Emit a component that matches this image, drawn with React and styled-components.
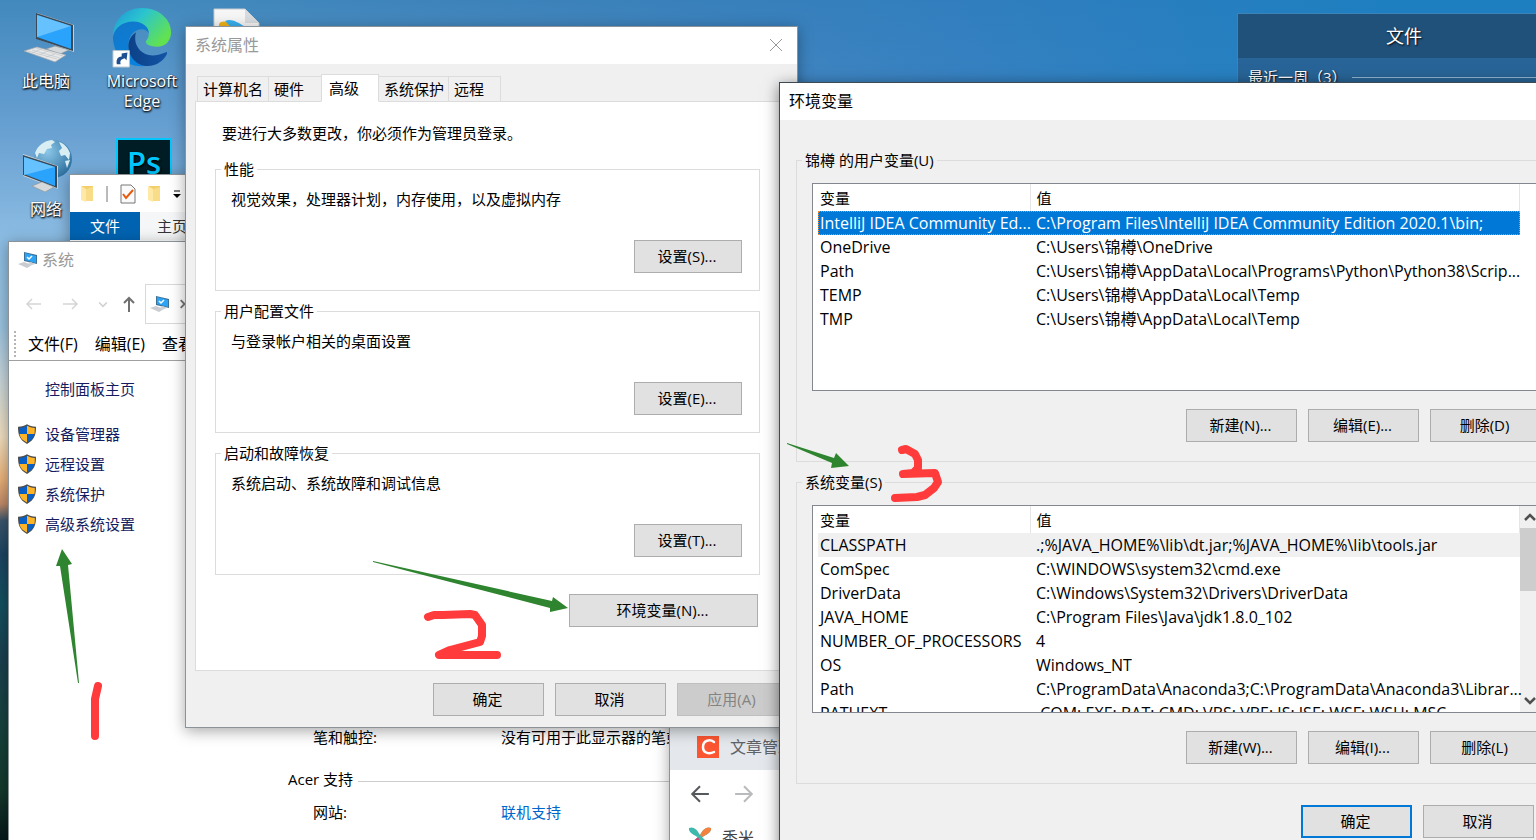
import React, { useState } from "react";
import styled, { createGlobalStyle, css } from "styled-components";

const GlobalStyle = createGlobalStyle`
  * {
    box-sizing: border-box;
  }

  body {
    margin: 0;
    font-family: "Open Sans", "Noto Sans CJK SC", sans-serif;
    font-size: 15px;
    line-height: 20px;
    color: #000;
  }

  button {
    font: inherit;
  }
`;

const Desktop = styled.main`
  position: relative;
  height: 100vh;
  overflow: hidden;
  background:
    linear-gradient(to right, transparent 10%, rgba(50, 118, 180, 0.4) 38%, rgba(44, 122, 190, 0.75) 62%, rgba(28, 126, 192, 0.95) 90%),
    linear-gradient(
      to bottom,
      #4289bd 0%,
      #649dd0 14%,
      #8abbe2 28%,
      #9bc3df 39%,
      #c6d4da 45%,
      #f0dfc0 52%,
      #e9b27a 57%,
      #c08a68 60%,
      #3a566c 62%,
      #1c4462 66%,
      #14505f 72%,
      #1b4150 78%,
      #17433f 86%,
      #143a2c 94%,
      #06181a 100%
    );
`;

const IconGrid = styled.div`
  display: grid;
  grid-template-columns: 92px 100px 90px;
  grid-auto-rows: 128px;
  padding-top: 8px;
`;

const Shortcut = styled.a`
  display: flex;
  flex-direction: column;
  align-items: center;
  gap: 3px;
  color: #fff;
  font-size: 16px;
  text-align: center;
  text-decoration: none;
  text-shadow: 0 1px 2px #000, 1px 1px 2px rgba(0, 0, 0, 0.8);

  svg {
    flex: none;
  }
`;

const Window = styled.section`
  position: absolute;
  left: ${props => props.x}px;
  top: ${props => props.y}px;
  width: ${props => props.w}px;
  min-height: ${props => props.h || 0}px;
  border: 1px solid ${props => (props.active ? "#3c4a55" : "#8b9399")};
  background: ${props => props.bg || "#fff"};
  box-shadow: 0 3px 14px rgba(0, 0, 0, ${props => (props.active ? 0.5 : 0.35)});
`;

const TitleBar = styled.header`
  display: flex;
  align-items: center;
  justify-content: space-between;
  height: 37px;
  padding: 0 9px 2px;
  background: #fff;
  font-size: 16px;
  color: ${props => (props.active ? "#000" : "#999")};

  h2 {
    margin: 0;
    font-size: inherit;
    font-weight: normal;
  }
`;

const CloseButton = styled.button`
  display: flex;
  padding: 5px;
  border: 0;
  background: none;
`;

const PushButton = styled.button`
  width: ${props => props.w || 111}px;
  height: 33px;
  padding: 0 2px 2px 0;
  border: 1px solid #adadad;
  background: #e1e1e1;
  color: #000;

  ${props =>
    props.primary &&
    css`
      border: 2px solid #0078d7;
    `};

  &:disabled {
    border-color: #bfbfbf;
    background: #ccc;
    color: #838383;
  }
`;

const ButtonRow = styled.div`
  display: flex;
  justify-content: flex-end;
  gap: 11px;
`;

const Group = styled.fieldset`
  min-width: 0;
  margin: 0;
  border: 1px solid #dcdcdc;

  legend {
    height: 20px;
    padding: 0 3px;
  }
`;

/* explorer */

const QuickBar = styled.div`
  display: flex;
  align-items: center;
  gap: 12px;
  height: 37px;
  padding-left: 11px;
`;

const RibbonTabs = styled.div`
  display: flex;
  height: 28px;
  background: #f5f6f7;

  button {
    width: 64px;
    padding: 0;
    border: 0;
    background: none;
    color: #333;
  }

  button:first-child {
    width: 70px;
    background: #0063b1;
    color: #fff;
  }
`;

/* control panel: system */

const SystemTitle = styled(TitleBar)`
  justify-content: flex-start;
  gap: 4px;
`;

const NavBar = styled.nav`
  display: flex;
  align-items: center;
  gap: 16px;
  height: 49px;
  padding-left: 15px;
`;

const IconButton = styled.button`
  display: flex;
  padding: 0;
  border: 0;
  background: none;
`;

const NavSteps = styled.div`
  display: flex;
  gap: 20px;
`;

const NavMore = styled.div`
  display: flex;
  align-items: center;
  gap: 10px;
`;

const AddressBox = styled.div`
  display: flex;
  flex: 1;
  align-items: center;
  gap: 6px;
  height: 40px;
  margin-right: 12px;
  margin-left: -9px;
  padding-left: 4px;
  border: 1px solid #d9d9d9;
`;

const MenuBar = styled.div`
  display: flex;
  align-items: center;
  gap: 17px;
  height: 33px;
  padding-left: 5px;
  border-bottom: 1px solid #a0a0a0;

  button {
    padding: 0;
    border: 0;
    background: none;
    font-size: 16px;
  }

  &::before {
    width: 2px;
    height: 26px;
    margin-right: -5px;
    background: repeating-linear-gradient(#b5b5b5 0 2px, transparent 2px 4px);
    content: "";
  }
`;

const SystemBody = styled.div`
  display: grid;
  grid-template-columns: 279px 1fr;
`;

const Sidebar = styled.nav`
  padding: 13px 0 0 9px;

  a {
    display: flex;
    align-items: center;
    gap: 9px;
    height: 30px;
    color: #151c60;
    text-decoration: none;
  }

  > a {
    margin-bottom: 15px;
    padding-left: 27px;
  }

  ul {
    margin: 0;
    padding: 0;
    list-style: none;
  }
`;

const SystemInfo = styled.div`
  padding-top: 361px;
`;

const InfoRow = styled.div`
  display: grid;
  grid-template-columns: 188px 1fr;
  align-items: center;
  height: 30px;
  margin-bottom: 12px;
  padding-left: 25px;

  a {
    color: #0066cc;
    text-decoration: none;
  }
`;

const InfoHeading = styled.h3`
  display: flex;
  align-items: center;
  gap: 5px;
  height: 30px;
  margin: 0 0 3px;
  font-size: 15px;
  font-weight: normal;

  &::after {
    flex: 1;
    height: 1px;
    margin-top: 5px;
    background: #ccc;
    content: "";
  }
`;

/* browser */

const BrowserTab = styled.div`
  display: flex;
  align-items: flex-end;
  gap: 11px;
  height: 69px;
  padding: 0 0 12px 27px;
  background: #e4e8ec;
  color: #5f6368;
  font-size: 16px;
  line-height: 22px;
`;

const BrowserBar = styled.div`
  display: flex;
  align-items: center;
  gap: 24px;
  height: 48px;
  padding-left: 20px;
`;

const Bookmarks = styled.div`
  display: flex;
  align-items: center;
  gap: 10px;
  padding-left: 18px;
  color: #444;
  font-size: 16px;
  line-height: 40px;

  svg:last-child {
    margin-left: 14px;
  }
`;

/* system properties */

const Body = styled.div`
  padding: 10px 9px 11px;
`;

const TabList = styled.div`
  display: flex;
  align-items: flex-end;
  margin-bottom: -1px;
  padding-left: 2px;
`;

const Tab = styled.button`
  position: relative;
  width: ${props => props.w}px;
  height: 26px;
  margin-right: -1px;
  padding: 0 5px;
  border: 1px solid #dcdcdc;
  background: #f0f0f0;
  text-align: left;
  line-height: 24px;
  white-space: nowrap;

  &[aria-selected="true"] {
    z-index: 1;
    height: 28px;
    padding: 0 7px;
    border-bottom-color: #fff;
    background: #fff;
  }
`;

const TabPanel = styled.div`
  margin-bottom: 12px;
  padding: 21px 27px 43px 19px;
  border: 1px solid #dcdcdc;
  background: #fff;

  > p {
    margin: 0 0 16px;
    padding-left: 7px;
  }
`;

const Setting = styled(Group)`
  margin-bottom: 10px;
  padding: 10px 17px 17px 15px;

  legend {
    margin-left: -10px;
  }

  p {
    margin: 0 0 31px;
  }
`;

const PanelAction = styled(ButtonRow)`
  padding: 9px 2px 0 0;
`;

/* environment variables */

const EnvBody = styled.div`
  display: grid;
  gap: 10px;
  padding: 30px 15px 20px 16px;

  > ${ButtonRow} {
    padding: 11px 23px 0 0;
  }
`;

const EnvGroup = styled(Group)`
  padding: 13px 15px 19px;

  legend {
    margin-left: -10px;
  }
`;

const ListBox = styled.div`
  display: grid;
  grid-template-rows: 100%;
  grid-template-columns: 1fr 20px;
  height: 208px;
  margin-bottom: 18px;
  padding-left: 5px;
  overflow: hidden;
  border: 1px solid #828790;
  background: #fff;
`;

const VarTable = styled.table`
  position: relative;
  width: 100%;
  height: max-content;
  border-collapse: collapse;
  table-layout: fixed;
  font-size: 16px;
  text-align: left;
  white-space: nowrap;

  th {
    height: 27px;
    padding: 0 0 0 2px;
    border-right: 1px solid #e5e5e5;
    font-size: 15px;
    font-weight: normal;
  }

  th:first-child {
    width: 212px;
  }

  td {
    height: 24px;
    padding: 0 0 0 2px;
  }

  th + th,
  td + td {
    padding-left: 6px;
  }
`;

const VarRow = styled.tr`
  ${props =>
    props.mark === "selected" &&
    css`
      outline: 1px dotted #ff8728;
      outline-offset: -1px;
      background: #0078d7;
      color: #fff;
    `};

  ${props =>
    props.mark === "inactive" &&
    css`
      background: #f0f0f0;
    `};
`;

const ScrollBar = styled.div`
  display: flex;
  flex-direction: column;
  align-items: center;
  background: #f0f0f0;

  button {
    display: flex;
    align-items: center;
    justify-content: center;
    height: 22px;
    padding: 0;
    border: 0;
    background: none;
  }

  span {
    width: 100%;
    height: 63px;
    margin-bottom: auto;
    background: #cdcdcd;
  }
`;

/* translucent file box on the desktop */

const FileBox = styled.aside`
  position: absolute;
  top: 13px;
  left: 1237px;
  width: 334px;
  height: 300px;
  border: 1px solid #3c84b8;
  background: #286497;
  color: #fff;
  text-shadow: 1px 1px 2px #000;

  h2 {
    margin: 0;
    background: #20517b;
    font-size: 18px;
    font-weight: normal;
    line-height: 44px;
    text-align: center;
  }

  p {
    display: flex;
    align-items: center;
    gap: 5px;
    margin: 9px 0 0 10px;
  }

  p::after {
    flex: 1;
    height: 1px;
    background: #8fb4d0;
    content: "";
  }
`;

const Marks = styled.svg`
  position: absolute;
  top: 0;
  left: 0;
  pointer-events: none;
`;

const ComputerIcon = () => (
  <svg width="60" height="60" viewBox="0 0 60 60">
    <path d="M21 5l37 12v27L21 31z" fill="#c9cdd1" />
    <path d="M20 5l37 12v26L20 31z" fill="#3b4a57" />
    <path d="M21 7l34 11v23L21 29z" fill="#29a3fb" />
    <path d="M21 7l34 11-34 11z" fill="#66c1ff" />
    <path d="M40 38l5 2v5h-6z" fill="#a5abb0" />
    <path d="M30 41l9-3 14 4-9 4z" fill="#d6d9db" stroke="#8c9296" strokeWidth=".6" />
    <path d="M8 43l13-4 29 8-11 7z" fill="#e7e8e9" stroke="#a0a4a7" strokeWidth=".7" />
    <path d="M12 43l29 8M16 42l28 8M20 40l27 8M16 45l9-4M23 47l9-4M30 49l9-3" stroke="#c3c6c9" strokeWidth=".7" />
  </svg>
);

const EdgeIcon = () => (
  <svg width="62" height="60" viewBox="0 0 62 62">
    <defs>
      <linearGradient id="edgeTop" x1="0" y1="0" x2="1" y2=".6">
        <stop offset="0" stopColor="#1c93d8" />
        <stop offset=".45" stopColor="#2ac4d0" />
        <stop offset="1" stopColor="#62e250" />
      </linearGradient>
      <linearGradient id="edgeMid" x1="0" y1="0" x2=".5" y2="1">
        <stop offset="0" stopColor="#1176c8" />
        <stop offset="1" stopColor="#0a82dd" />
      </linearGradient>
      <linearGradient id="edgeLow" x1="0" y1="0" x2="1" y2="0">
        <stop offset="0" stopColor="#0c4187" />
        <stop offset="1" stopColor="#1254a6" />
      </linearGradient>
    </defs>
    <path d="M1 30C1 12 14 0 31 0c18 0 30 12 30 25 0 10-7 15-14 15-8 0-12-2-12-5 0-2 3-3 3-9 0-6-6-10-12-10-12 0-21 6-25 14z" fill="url(#edgeTop)" />
    <path d="M1 30c1-9 10-16 21-16 10 0 16 6 16 12-1-2-4-4-7-4-7 0-14 6-14 16 0 12 8 20 17 22C15 62 1 48 1 30z" fill="url(#edgeMid)" />
    <path d="M25 25c-5 3-8 8-8 14 0 12 9 21 20 21 9 0 17-6 20-13 0-2-1-2-2-1-5 2-9 3-13 3-11 0-18-9-18-17 0-3 0-5 1-7z" fill="url(#edgeLow)" />
    <path d="M1 44h17v17H1z" fill="#fff" stroke="#b9c4cc" />
    <path d="M5 58c-1-5 1-8 5-8v-3l6-1-1 8-2-2c-4 1-5 3-4 6z" fill="#1d4f91" />
  </svg>
);

const PageIcon = () => (
  <svg width="60" height="60" viewBox="0 0 60 60">
    <path d="M7 1h31l14 14v44H7z" fill="#f6f6f6" stroke="#c8ccd0" />
    <path d="M38 1v14h14z" fill="#d9dde0" />
    <path d="M12 16c2-3 6-3 9-1l10 10H12z" fill="#f4b41a" />
    <path d="M18 13c6-3 12 1 19 5l-8 6z" fill="#38b0f0" />
  </svg>
);

const NetworkIcon = () => (
  <svg width="60" height="60" viewBox="0 0 60 60">
    <defs>
      <radialGradient id="globe" cx=".35" cy=".3" r=".8">
        <stop offset="0" stopColor="#8cc7e8" />
        <stop offset="1" stopColor="#286b9c" />
      </radialGradient>
    </defs>
    <circle cx="37" cy="23" r="19" fill="url(#globe)" />
    <path d="M19 17c3-8 9-12 17-13l3 2-4 3 1 3-5 1-3 5-5-1-2 5zM43 6c6 2 9 6 11 11l-1 7-4-5-4 1-2-5 3-3zM49 25l5-1-3 8z" fill="#d8eef2" />
    <path d="M7 18l35 12v23L7 40z" fill="#d0d4d7" />
    <path d="M7 19l34 11v22L7 39z" fill="#3b4a57" />
    <path d="M8 21l31 10v19L8 38z" fill="#29a3fb" />
    <path d="M8 21l31 10-31 8z" fill="#66c1ff" />
    <path d="M16 50l10-4 12 5-9 5z" fill="#d6d9db" stroke="#8c9296" strokeWidth=".6" />
  </svg>
);

const PhotoshopIcon = () => (
  <svg width="60" height="60" viewBox="0 0 60 60">
    <rect x="5" y="3" width="54" height="54" fill="#001d26" stroke="#00c8ff" strokeWidth="2" />
    <text x="32" y="38" fill="#00c8ff" fontFamily="Open Sans" fontSize="31" fontWeight="600" textAnchor="middle">Ps</text>
  </svg>
);

const SmallComputer = () => (
  <svg width="20" height="18" viewBox="0 0 20 18">
    <path d="M6 1l13 3v9L6 10z" fill="#3f6f94" />
    <path d="M7 2l11 3v7L7 9z" fill="#2ca4f5" />
    <path d="M9 6l2 2 3-3" fill="none" stroke="#fff" strokeWidth="1.5" />
    <path d="M0 13l6-2 8 3-5 3zM10 12l3-1 4 2-3 1z" fill="#c9cdd1" />
  </svg>
);

const Folder = () => (
  <svg width="13" height="18" viewBox="0 0 13 18">
    <path d="M1 1h11v13H1z" fill="#f3cf6c" />
    <path d="M0 1l5 3v13l-5-2z" fill="#ffe9a6" />
    <path d="M5 4l7-2v14H5z" fill="#f9dc87" />
  </svg>
);

const Shield = () => (
  <svg width="18" height="20" viewBox="0 0 18 20">
    <path d="M9 .2C11.500 1.800 14 2.600 18 2.800 18 11 16.500 15.800 9 20 1.500 15.800 0 11 0 2.800 4 2.600 6.500 1.800 9 .2z" fill="#4d4d4d" />
    <path d="M9 1.800V10H1.500C1.200 8.300 1.200 6.300 1.200 3.900 4.500 3.800 6.800 3.100 9 1.800z" fill="#0a5fc4" />
    <path d="M9 1.800c2.200 1.300 4.500 2 7.800 2.100 0 2.400 0 4.400-.3 6.100H9z" fill="#ffb428" />
    <path d="M1.500 10H9v8.500C4 16 2.200 13.500 1.500 10z" fill="#ffb428" />
    <path d="M16.500 10H9v8.500c5-2.500 6.800-5 7.500-8.500z" fill="#0a5fc4" />
  </svg>
);

const Arrow = ({ d, color, size = 18, width = 1.5 }) => (
  <svg width={size} height={size} viewBox="0 0 18 18" fill="none" stroke={color} strokeWidth={width}>
    <path d={d} />
  </svg>
);

const LEFT = "M17 9H2M9 2L2 9l7 7";
const RIGHT = "M1 9h15M9 2l7 7-7 7";
const NAV_LEFT = "M17 9H3M8 4L3 9l5 5";
const NAV_RIGHT = "M1 9h14M10 4l5 5-5 5";

const tabs = [
  { name: "计算机名", w: 72 },
  { name: "硬件", w: 54 },
  { name: "高级", w: 58 },
  { name: "系统保护", w: 71 },
  { name: "远程", w: 53 }
];

const settings = [
  { name: "性能", text: "视觉效果，处理器计划，内存使用，以及虚拟内存", button: "设置(S)..." },
  { name: "用户配置文件", text: "与登录帐户相关的桌面设置", button: "设置(E)..." },
  { name: "启动和故障恢复", text: "系统启动、系统故障和调试信息", button: "设置(T)..." }
];

const userVars = [
  ["IntelliJ IDEA Community Ed...", "C:\\Program Files\\IntelliJ IDEA Community Edition 2020.1\\bin;"],
  ["OneDrive", "C:\\Users\\锦樽\\OneDrive"],
  ["Path", "C:\\Users\\锦樽\\AppData\\Local\\Programs\\Python\\Python38\\Scrip..."],
  ["TEMP", "C:\\Users\\锦樽\\AppData\\Local\\Temp"],
  ["TMP", "C:\\Users\\锦樽\\AppData\\Local\\Temp"]
];

const systemVars = [
  ["CLASSPATH", ".;%JAVA_HOME%\\lib\\dt.jar;%JAVA_HOME%\\lib\\tools.jar"],
  ["ComSpec", "C:\\WINDOWS\\system32\\cmd.exe"],
  ["DriverData", "C:\\Windows\\System32\\Drivers\\DriverData"],
  ["JAVA_HOME", "C:\\Program Files\\Java\\jdk1.8.0_102"],
  ["NUMBER_OF_PROCESSORS", "4"],
  ["OS", "Windows_NT"],
  ["Path", "C:\\ProgramData\\Anaconda3;C:\\ProgramData\\Anaconda3\\Librar..."],
  ["PATHEXT", ".COM;.EXE;.BAT;.CMD;.VBS;.VBE;.JS;.JSE;.WSF;.WSH;.MSC"]
];

const Variables = ({ title, rows, mark, buttons, scroll }) => (
  <EnvGroup>
    <legend>{title}</legend>
    <ListBox>
      <VarTable>
        <thead>
          <tr>
            <th>变量</th>
            <th>值</th>
          </tr>
        </thead>
        <tbody>
          {rows.map(([name, value], i) => (
            <VarRow key={name} mark={i === 0 ? mark : undefined}>
              <td>{name}</td>
              <td>{value}</td>
            </VarRow>
          ))}
        </tbody>
      </VarTable>
      {scroll && (
        <ScrollBar>
          <button type="button" aria-label="向上滚动">
            <Arrow d="M4 12l5-5 5 5" color="#505050" width={2.5} />
          </button>
          <span />
          <button type="button" aria-label="向下滚动">
            <Arrow d="M4 6l5 5 5-5" color="#505050" width={2.5} />
          </button>
        </ScrollBar>
      )}
    </ListBox>
    <ButtonRow>
      {buttons.map(label => (
        <PushButton key={label} type="button">{label}</PushButton>
      ))}
    </ButtonRow>
  </EnvGroup>
);

const ExplorerWindow = () => (
  <Window x={69} y={174} w={400} h={300}>
    <QuickBar>
      <Folder />
      <svg width="2" height="18"><path d="M1 1v16" stroke="#777" /></svg>
      <svg width="16" height="20" viewBox="0 0 16 20">
        <path d="M1 1h10l4 4v14H1z" fill="#fafafa" stroke="#777" />
        <path d="M3 10l3 4 7-8" fill="none" stroke="#e8590c" strokeWidth="2" />
      </svg>
      <Folder />
      <svg width="8" height="10" viewBox="0 0 8 10"><path d="M1 2h6" stroke="#000" /><path d="M0 5h8L4 9z" /></svg>
    </QuickBar>
    <RibbonTabs>
      <button type="button">文件</button>
      <button type="button">主页</button>
    </RibbonTabs>
  </Window>
);

const SystemWindow = () => (
  <Window x={8} y={241} w={900} h={700}>
    <SystemTitle>
      <SmallComputer />
      <h2>系统</h2>
    </SystemTitle>
    <NavBar>
      <NavSteps>
        <IconButton type="button" aria-label="后退"><Arrow d={NAV_LEFT} color="#d5d5d5" /></IconButton>
        <IconButton type="button" aria-label="前进"><Arrow d={NAV_RIGHT} color="#d5d5d5" /></IconButton>
      </NavSteps>
      <NavMore>
        <IconButton type="button" aria-label="最近"><Arrow d="M4 7l5 5 5-5" color="#d0d0d0" size={14} width={2} /></IconButton>
        <IconButton type="button" aria-label="向上"><Arrow d="M9 17V3M4 8l5-5 5 5" color="#707070" width={2} /></IconButton>
      </NavMore>
      <AddressBox>
        <SmallComputer />
        <Arrow d="M6 4l5 5-5 5" color="#777" size={14} width={2.5} />
      </AddressBox>
    </NavBar>
    <MenuBar>
      <button type="button">文件(F)</button>
      <button type="button">编辑(E)</button>
      <button type="button">查看(V)</button>
    </MenuBar>
    <SystemBody>
      <Sidebar>
        <a href="#home">控制面板主页</a>
        <ul>
          {["设备管理器", "远程设置", "系统保护", "高级系统设置"].map(item => (
            <li key={item}>
              <a href={`#${item}`}><Shield />{item}</a>
            </li>
          ))}
        </ul>
      </Sidebar>
      <SystemInfo>
        <InfoRow><span>笔和触控:</span><span>没有可用于此显示器的笔或触控输入</span></InfoRow>
        <InfoHeading>Acer 支持</InfoHeading>
        <InfoRow><span>网站:</span><a href="#support">联机支持</a></InfoRow>
      </SystemInfo>
    </SystemBody>
  </Window>
);

const BrowserWindow = () => (
  <Window x={669} y={700} w={700} h={300}>
    <BrowserTab>
      <svg width="22" height="22" viewBox="0 0 22 22">
        <rect width="22" height="22" fill="#fc5531" />
        <path d="M17 6c-4-3-11-2-11 5s7 7 11 5" fill="none" stroke="#fff" strokeWidth="2.500" strokeLinecap="round" />
      </svg>
      文章管理
    </BrowserTab>
    <BrowserBar>
      <IconButton type="button" aria-label="后退"><Arrow d={LEFT} color="#55585c" size={20} width={1.8} /></IconButton>
      <IconButton type="button" aria-label="前进"><Arrow d={RIGHT} color="#b8babc" size={20} width={1.8} /></IconButton>
      <Arrow d="M15 5a7 7 0 1 0 1 5" color="#55585c" size={22} width={2} />
    </BrowserBar>
    <Bookmarks>
      <svg width="24" height="24" viewBox="0 0 24 24">
        <path d="M1 2c4-2 8 1 11 7 3-6 7-9 11-7 1 4-5 7-9 9l9 9c-5 3-9 0-11-5-2 5-7 7-11 4l9-8C6 9 0 6 1 2z" fill="#3fb8ae" />
        <path d="M12 9c3-6 7-9 11-7 1 4-5 7-9 9z" fill="#f5813f" />
        <path d="M1 19l9-8 2 4c-2 5-7 7-11 4z" fill="#d8436f" />
      </svg>
      秀米
      <svg width="20" height="20" viewBox="0 0 20 20"><circle cx="10" cy="10" r="9" fill="#4a4d51" /></svg>
    </Bookmarks>
  </Window>
);

const PropertiesDialog = () => {
  const [selected, setSelected] = useState("高级");

  return (
    <Window x={185} y={26} w={613} bg="#f0f0f0">
      <TitleBar>
        <h2>系统属性</h2>
        <CloseButton type="button" aria-label="关闭">
          <svg width="14" height="14" viewBox="0 0 14 14"><path d="M1 1l12 12M13 1L1 13" stroke="#999" /></svg>
        </CloseButton>
      </TitleBar>
      <Body>
        <TabList role="tablist">
          {tabs.map(({ name, w }) => (
            <Tab key={name} type="button" role="tab" w={w} aria-selected={selected === name} onClick={() => setSelected(name)}>
              {name}
            </Tab>
          ))}
        </TabList>
        <TabPanel role="tabpanel">
          <p>要进行大多数更改，你必须作为管理员登录。</p>
          {settings.map(({ name, text, button }) => (
            <Setting key={name}>
              <legend>{name}</legend>
              <p>{text}</p>
              <ButtonRow>
                <PushButton type="button" w={108}>{button}</PushButton>
              </ButtonRow>
            </Setting>
          ))}
          <PanelAction>
            <PushButton type="button" w={189}>环境变量(N)...</PushButton>
          </PanelAction>
        </TabPanel>
        <ButtonRow>
          <PushButton type="button">确定</PushButton>
          <PushButton type="button">取消</PushButton>
          <PushButton type="button" disabled>应用(A)</PushButton>
        </ButtonRow>
      </Body>
    </Window>
  );
};

const EnvironmentDialog = () => (
  <Window x={779} y={82} w={794} bg="#f0f0f0" active>
    <TitleBar active>
      <h2>环境变量</h2>
    </TitleBar>
    <EnvBody>
      <Variables title="锦樽 的用户变量(U)" rows={userVars} mark="selected" buttons={["新建(N)...", "编辑(E)...", "删除(D)"]} />
      <Variables title="系统变量(S)" rows={systemVars} mark="inactive" buttons={["新建(W)...", "编辑(I)...", "删除(L)"]} scroll />
      <ButtonRow>
        <PushButton type="button" primary>确定</PushButton>
        <PushButton type="button">取消</PushButton>
      </ButtonRow>
    </EnvBody>
  </Window>
);

const App = () => (
  <Desktop>
    <GlobalStyle />
    <IconGrid>
      <Shortcut href="#pc"><ComputerIcon />此电脑</Shortcut>
      <Shortcut href="#edge"><EdgeIcon />Microsoft<br />Edge</Shortcut>
      <Shortcut href="#page" aria-label="文档"><PageIcon /></Shortcut>
      <Shortcut href="#network"><NetworkIcon />网络</Shortcut>
      <Shortcut href="#ps" aria-label="Photoshop"><PhotoshopIcon /></Shortcut>
    </IconGrid>
    <FileBox>
      <h2>文件</h2>
      <p>最近一周（3）</p>
    </FileBox>
    <ExplorerWindow />
    <SystemWindow />
    <BrowserWindow />
    <PropertiesDialog />
    <EnvironmentDialog />
    <Marks width="960" height="760" viewBox="0 0 960 760">
      <g fill="#2f842f">
        <path d="M62 549l10 15-4 1 11 118h-1L60 566h-4z" />
        <path d="M568 608l-18 4v-4L373 562v-1l179 40 1-4z" />
        <path d="M849 466l-18 2 1-5-45-19v-1l47 15 2-5z" />
      </g>
      <g fill="none" stroke="#ff3b3b" strokeWidth="8" strokeLinecap="round" strokeLinejoin="round">
        <path d="M98 686l-3 13v37" />
        <path d="M428 617l6-2h9l27-1 5 1 7 10v11l-2 6-30 8-11 5h58" />
        <path d="M902 450l4-1 9 5 3 6v8l-5 5-10 1 32-1 3 9-4 6-9 7-8 2-22 1" />
      </g>
    </Marks>
  </Desktop>
);

export default App;
